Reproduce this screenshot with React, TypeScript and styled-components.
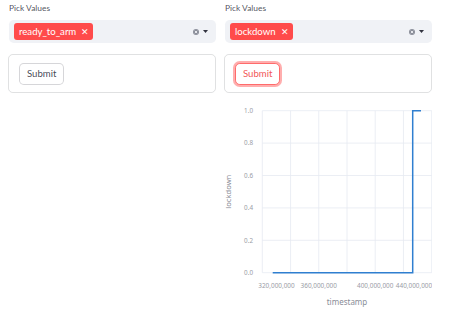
import React from "react";
import styled, { createGlobalStyle, css } from "styled-components";

const GlobalStyle = createGlobalStyle`
  body {
    margin: 0;
    background: #fff;
    font-family: Lato, "Liberation Sans", sans-serif;
    color: rgb(49, 51, 63);
  }
`;

const Page = styled.div`
  display: grid;
  grid-template-columns: 208px 208px;
  column-gap: 8px;
  padding: 3px 0 0 8px;
  align-items: start;
`;

const Column = styled.div`
  display: flex;
  flex-direction: column;
`;

const Label = styled.div`
  font-size: 8.4px;
  line-height: 10px;
  height: 10px;
  margin: 0 0 7px 1px;
  color: rgba(49, 51, 63, 0.85);
`;

const SelectBox = styled.div`
  display: flex;
  align-items: center;
  height: 23px;
  margin-left: 1px;
  padding: 0 8px 0 5px;
  background: #f0f2f6;
  border-radius: 4.8px;
  box-sizing: border-box;
`;

const Tag = styled.span`
  display: inline-flex;
  align-items: center;
  gap: 5px;
  height: 17px;
  padding: 0 4px 0 5px;
  background: #ff4b4b;
  color: #fff;
  border-radius: 3px;
  font-size: 9.6px;
`;

const TagClose = styled.span`
  font-size: 9px;
  line-height: 1;
`;

const Spacer = styled.div`
  flex: 1;
`;

const Controls = styled.div`
  display: flex;
  align-items: center;
  gap: 4px;
`;

const FormBox = styled.div`
  margin-top: 11px;
  height: 39px;
  box-sizing: border-box;
  border: 1px solid rgba(49, 51, 63, 0.15);
  border-radius: 4.8px;
  display: flex;
  align-items: center;
  padding-left: 10px;
`;

const Button = styled.button<{ $focused?: boolean }>`
  height: 22px;
  padding: 0 7px;
  background: #fff;
  border: 1px solid rgba(49, 51, 63, 0.2);
  border-radius: 4.8px;
  font-family: Lato, "Liberation Sans", sans-serif;
  font-size: 9.6px;
  color: rgba(49, 51, 63, 0.9);
  ${(p) =>
    p.$focused &&
    css`
      border-color: #ff6b6b;
      color: #f25858;
      box-shadow: 0 0 0 2px rgba(255, 75, 75, 0.45);
    `}
`;

const ChartWrap = styled.div`
  margin-top: 7px;
`;

const Chart = styled.svg`
  display: block;
  font-family: "Noto Sans", "Liberation Sans", sans-serif;
`;

const ClearIcon = () => (
  <svg width="6" height="6" viewBox="0 0 6 6">
    <circle cx="3" cy="3" r="3" fill="#8b8f9a" />
    <path d="M1.8 1.8 L4.2 4.2 M4.2 1.8 L1.8 4.2" stroke="#f0f2f6" strokeWidth="0.9" />
  </svg>
);

const Caret = () => (
  <svg width="5" height="3" viewBox="0 0 5 3">
    <path d="M0 0 H5 L2.5 3 Z" fill="rgb(49,51,63)" />
  </svg>
);

type PickerProps = { value: string; focused?: boolean };

const Picker = ({ value, focused }: PickerProps) => (
  <>
    <Label>Pick Values</Label>
    <SelectBox>
      <Tag>
        {value}
        <TagClose>✕</TagClose>
      </Tag>
      <Spacer />
      <Controls>
        <ClearIcon />
        <Caret />
      </Controls>
    </SelectBox>
    <FormBox>
      <Button $focused={focused}>Submit</Button>
    </FormBox>
  </>
);

// plot area inside the 208px wide svg
const left = 38.3;
const right = 207.7;
const top = 10.7;
const bottom = 172.7;
const xStep = (right - left) / 6; // 20,000,000 per step
const yTicks = [1.0, 0.8, 0.6, 0.4, 0.2, 0.0];
const xLabels = [
  { text: "320,000,000", x: left - 4, anchor: "start" },
  { text: "360,000,000", x: left + xStep * 2, anchor: "middle" },
  { text: "400,000,000", x: left + xStep * 4, anchor: "middle" },
  { text: "440,000,000", x: right + 0.5, anchor: "end" },
];

const LineChart = () => {
  const yOf = (v: number) => bottom - v * (bottom - top);
  return (
    <Chart width="208" height="215" viewBox="0 0 208 215">
      {Array.from({ length: 7 }, (_, i) => (
        <line
          key={`gx${i}`}
          x1={left + i * xStep}
          x2={left + i * xStep}
          y1={top}
          y2={bottom}
          stroke="#e6eaf1"
          strokeWidth="0.8"
        />
      ))}
      {yTicks.map((v) => (
        <g key={v}>
          <line x1={left} x2={right} y1={yOf(v)} y2={yOf(v)} stroke="#e6eaf1" strokeWidth="0.8" />
          <text x={29} y={yOf(v) + 2.3} fontSize="6.3" fill="#9a9ca6" textAnchor="end">
            {v.toFixed(1)}
          </text>
        </g>
      ))}
      {xLabels.map((l) => (
        <text
          key={l.text}
          x={l.x}
          y={187.5}
          fontSize="6.4"
          fill="#9a9ca6"
          textAnchor={l.anchor as "start" | "middle" | "end"}
        >
          {l.text}
        </text>
      ))}
      <text x={123} y={205} fontSize="8" fill="#8a8d97" textAnchor="middle">
        timestamp
      </text>
      <text
        x={0}
        y={0}
        fontSize="7.6"
        fill="#8a8d97"
        textAnchor="middle"
        transform={`translate(6.5 ${(top + bottom) / 2}) rotate(-90)`}
      >
        lockdown
      </text>
      <polyline
        points={`48.7,${bottom} 188.7,${bottom} 188.7,${top} 197,${top}`}
        fill="none"
        stroke="#2f7fd0"
        strokeWidth="1.5"
      />
    </Chart>
  );
};

const App = () => (
  <>
    <GlobalStyle />
    <Page>
      <Column>
        <Picker value="ready_to_arm" />
      </Column>
      <Column>
        <Picker value="lockdown" focused />
        <ChartWrap>
          <LineChart />
        </ChartWrap>
      </Column>
    </Page>
  </>
);

export default App;
